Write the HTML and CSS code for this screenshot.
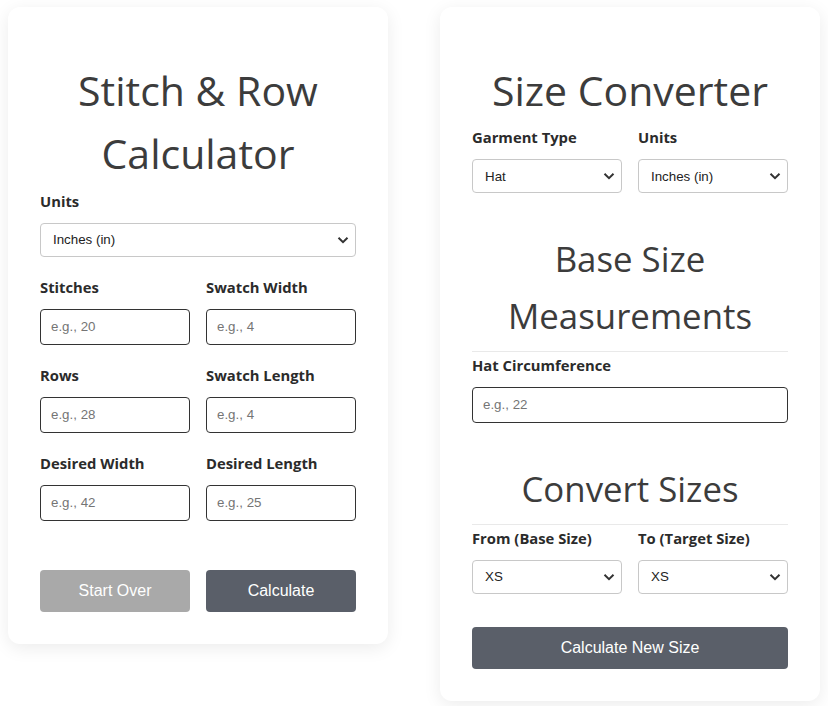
FILE: index.html
```html
<!DOCTYPE html>
<html lang="en">
<head>
<meta charset="utf-8">
<title>Knitting Tools</title>
<link rel="stylesheet" href="styles.css">
</head>
<body>
<div class="page">
  <section class="card">
    <h1 class="title">Stitch &amp; Row Calculator</h1>
    <div class="group">
      <label class="label">Units</label>
      <select class="select"><option>Inches (in)</option></select>
    </div>
    <div class="grid">
      <div class="group">
        <label class="label">Stitches</label>
        <input class="input" type="text" placeholder="e.g., 20">
      </div>
      <div class="group">
        <label class="label">Swatch Width</label>
        <input class="input" type="text" placeholder="e.g., 4">
      </div>
      <div class="group">
        <label class="label">Rows</label>
        <input class="input" type="text" placeholder="e.g., 28">
      </div>
      <div class="group">
        <label class="label">Swatch Length</label>
        <input class="input" type="text" placeholder="e.g., 4">
      </div>
      <div class="group">
        <label class="label">Desired Width</label>
        <input class="input" type="text" placeholder="e.g., 42">
      </div>
      <div class="group">
        <label class="label">Desired Length</label>
        <input class="input" type="text" placeholder="e.g., 25">
      </div>
    </div>
    <div class="actions actions-left">
      <button class="btn btn-light">Start Over</button>
      <button class="btn btn-dark">Calculate</button>
    </div>
  </section>

  <section class="card">
    <h1 class="title">Size Converter</h1>
    <div class="grid">
      <div class="group">
        <label class="label">Garment Type</label>
        <select class="select"><option>Hat</option></select>
      </div>
      <div class="group">
        <label class="label">Units</label>
        <select class="select"><option>Inches (in)</option></select>
      </div>
    </div>
    <h2 class="subtitle">Base Size Measurements</h2>
    <div class="group">
      <label class="label">Hat Circumference</label>
      <input class="input" type="text" placeholder="e.g., 22">
    </div>
    <h2 class="subtitle">Convert Sizes</h2>
    <div class="grid">
      <div class="group">
        <label class="label">From (Base Size)</label>
        <select class="select"><option>XS</option></select>
      </div>
      <div class="group">
        <label class="label">To (Target Size)</label>
        <select class="select"><option>XS</option></select>
      </div>
    </div>
    <div class="actions actions-right">
      <button class="btn btn-dark btn-wide">Calculate New Size</button>
    </div>
  </section>
</div>
</body>
</html>
```

FILE: styles.css
```css
* {
  box-sizing: border-box;
}

html, body {
  margin: 0;
  padding: 0;
  background: #ffffff;
}

body {
  font-family: "Open Sans", "Noto Sans", sans-serif;
  color: #333333;
}

.page {
  display: flex;
  align-items: flex-start;
  gap: 52px;
  padding: 7px 8px;
}

.card {
  width: 380px;
  flex: 0 0 380px;
  display: flex;
  flex-direction: column;
  background: #ffffff;
  border-radius: 12px;
  box-shadow: 0 4px 18px rgba(0, 0, 0, 0.08);
  padding: 32px;
}

.title {
  margin: 20px 0 3px;
  font-size: 41px;
  line-height: 63.4px;
  font-weight: 400;
  color: #3c3c3c;
  text-align: center;
}

.subtitle {
  margin: 20px 0 1px;
  padding-bottom: 6px;
  border-bottom: 1px solid #e9e9e9;
  font-size: 34.8px;
  line-height: 56.7px;
  font-weight: 400;
  color: #3c3c3c;
  text-align: center;
}

.group {
  display: flex;
  flex-direction: column;
  margin-bottom: 18px;
}

.grid {
  display: grid;
  grid-template-columns: 1fr 1fr;
  column-gap: 16px;
}

.label {
  display: block;
  font-size: 14.8px;
  line-height: 24px;
  font-weight: 700;
  color: #2b2b2b;
  margin-bottom: 10px;
}

.select {
  appearance: none;
  -webkit-appearance: none;
  width: 100%;
  height: 34px;
  padding: 0 28px 0 12px;
  border: 1px solid #c8c8c8;
  border-radius: 4px;
  background: #ffffff url("data:image/svg+xml,%3Csvg xmlns='http://www.w3.org/2000/svg' viewBox='0 0 12 8'%3E%3Cpath d='M1.5 1.8 6 6.2 10.5 1.8' fill='none' stroke='%23333' stroke-width='2'/%3E%3C/svg%3E") no-repeat right 6px center / 12px 8px;
  font-family: "Liberation Sans", Arial, sans-serif;
  font-size: 13.33px;
  color: #222222;
}

.input {
  width: 100%;
  height: 36px;
  padding: 0 10px;
  border: 1px solid #333333;
  border-radius: 4px;
  background: #ffffff;
  font-family: "Liberation Sans", Arial, sans-serif;
  font-size: 13.33px;
  color: #222222;
}

.input::placeholder {
  color: #757575;
}

.actions {
  display: grid;
  grid-template-columns: 1fr 1fr;
  column-gap: 16px;
}

.actions-left {
  margin-top: 31px;
}

.actions-right {
  margin-top: 15px;
  grid-template-columns: 1fr;
}

.btn {
  height: 42px;
  border: none;
  border-radius: 4px;
  font-family: "Liberation Sans", Arial, sans-serif;
  font-size: 16px;
  color: #ffffff;
}

.btn-light {
  background: #a9a9a9;
}

.btn-dark {
  background: #5a5f69;
}
```
